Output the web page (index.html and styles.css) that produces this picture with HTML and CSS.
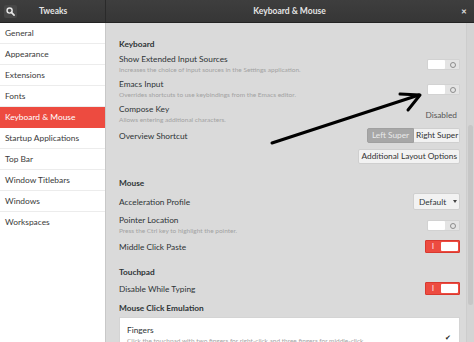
FILE: index.html
```html
<!DOCTYPE html>
<html>
<head>
    <meta charset="UTF-8">
    <title>Tweaks</title>
    <link rel="stylesheet" href="styles.css">
</head>
<body>
<div class="window">
    <div class="headerbar">
        <div class="header-left">
            <button class="search-btn">
                <svg width="9" height="9" viewBox="0 0 10 10"><circle cx="4" cy="4" r="2.8" fill="none" stroke="#e8e8e8" stroke-width="1.6"/><path d="M6 6 L9 9" stroke="#e8e8e8" stroke-width="1.8" stroke-linecap="round"/></svg>
            </button>
            <span class="app-name">Tweaks</span>
        </div>
        <div class="header-right">
            <span class="page-title">Keyboard &amp; Mouse</span>
            <span class="close">&#x2715;</span>
        </div>
    </div>
    <div class="main">
        <ul class="sidebar">
            <li>General</li>
            <li>Appearance</li>
            <li>Extensions</li>
            <li>Fonts</li>
            <li class="active">Keyboard &amp; Mouse</li>
            <li>Startup Applications</li>
            <li>Top Bar</li>
            <li>Window Titlebars</li>
            <li>Windows</li>
            <li>Workspaces</li>
        </ul>
        <div class="content">
            <div class="heading">Keyboard</div>
            <div class="row">
                <div class="text">
                    <div class="title">Show Extended Input Sources</div>
                    <div class="sub">Increases the choice of input sources in the Settings application.</div>
                </div>
                <span class="switch"><span class="knob"></span><span class="state"></span></span>
            </div>
            <div class="row">
                <div class="text">
                    <div class="title">Emacs Input</div>
                    <div class="sub">Overrides shortcuts to use keybindings from the Emacs editor.</div>
                </div>
                <span class="switch"><span class="knob"></span><span class="state"></span></span>
            </div>
            <div class="row">
                <div class="text">
                    <div class="title">Compose Key</div>
                    <div class="sub">Allows entering additional characters.</div>
                </div>
                <span class="value">Disabled</span>
            </div>
            <div class="row shortcut">
                <div class="title">Overview Shortcut</div>
                <div class="buttons">
                    <div class="linked">
                        <span class="btn pressed">Left Super</span>
                        <span class="btn">Right Super</span>
                    </div>
                    <span class="btn">Additional Layout Options</span>
                </div>
            </div>

            <div class="heading gap">Mouse</div>
            <div class="row simple">
                <div class="title">Acceleration Profile</div>
                <span class="combo">Default <span class="caret"></span></span>
            </div>
            <div class="row pointer">
                <div class="text">
                    <div class="title">Pointer Location</div>
                    <div class="sub">Press the Ctrl key to highlight the pointer.</div>
                </div>
                <span class="switch"><span class="knob"></span><span class="state"></span></span>
            </div>
            <div class="row simple">
                <div class="title">Middle Click Paste</div>
                <span class="switch on"><span class="state">I</span><span class="knob"></span></span>
            </div>

            <div class="heading gap">Touchpad</div>
            <div class="row simple">
                <div class="title">Disable While Typing</div>
                <span class="switch on"><span class="state">I</span><span class="knob"></span></span>
            </div>
            <div class="heading small-gap">Mouse Click Emulation</div>
            <div class="listbox">
                <div class="list-row">
                    <div class="text">
                        <div class="title">Fingers</div>
                        <div class="sub">Click the touchpad with two fingers for right-click and three fingers for middle-click.</div>
                    </div>
                    <span class="check">&#x2714;</span>
                </div>
            </div>
        </div>
        <div class="scrollbar"><div class="slider"></div></div>
    </div>
    <svg class="arrow" width="474" height="342" viewBox="0 0 474 342">
        <path d="M272 143 L419 95" stroke="#000" stroke-width="3" stroke-linecap="round" fill="none"/>
        <path d="M400 94 L420 95 L408 110" stroke="#000" stroke-width="3" stroke-linecap="round" stroke-linejoin="round" fill="none"/>
    </svg>
</div>
</body>
</html>
```

FILE: styles.css
```css
* {
    box-sizing: border-box;
}
html, body {
    margin: 0;
    padding: 0;
}
body {
    font-family: Lato, "Noto Sans", sans-serif;
    font-size: 8.3px;
    color: #2e3436;
    width: 474px;
    height: 342px;
    overflow: hidden;
}
.window {
    position: relative;
    width: 474px;
    height: 342px;
    display: flex;
    flex-direction: column;
    background-color: #dadada;
}
.headerbar {
    height: 23px;
    flex: none;
    display: flex;
    background: linear-gradient(#3e3e3e, #363636);
    border-bottom: 1px solid #232323;
    color: #e4e4e4;
    font-weight: bold;
}
.header-left {
    width: 106px;
    display: flex;
    align-items: center;
    border-right: 1px solid #2a2a2a;
    padding-left: 4px;
}
.search-btn {
    width: 13px;
    height: 13px;
    padding: 0;
    border: none;
    border-radius: 2px;
    background-color: #474747;
    display: flex;
    align-items: center;
    justify-content: center;
}
.app-name {
    margin-left: 22px;
    font-size: 8.5px;
}
.header-right {
    flex: 1;
    display: flex;
    align-items: center;
    padding-left: 40px;
    padding-right: 7px;
}
.page-title {
    flex: 1;
    text-align: center;
    font-size: 8.5px;
}
.close {
    font-size: 7px;
    color: #dcdcdc;
    margin-left: 28px;
}
.main {
    flex: 1;
    display: flex;
    min-height: 0;
}
.sidebar {
    list-style: none;
    margin: 0;
    padding: 0;
    width: 106px;
    flex: none;
    background-color: #fff;
    border-right: 1px solid #c8c8c8;
}
.sidebar li {
    height: 21px;
    line-height: 20px;
    padding-left: 5px;
    border-bottom: 1px solid #ececec;
    color: #3a3a3a;
    font-size: 8.4px;
}
.sidebar li:last-child {
    border-bottom: none;
}
.sidebar li.active {
    background-color: #ed4b40;
    color: #fff;
    border-bottom-color: #ed4b40;
}
.content {
    flex: 1;
    padding: 15px 6px 0 13px;
    overflow: hidden;
}
.heading {
    font-weight: bold;
    line-height: 12px;
    height: 12px;
}
.heading.gap {
    margin-top: 13px;
}
.heading.small-gap {
    margin-top: 7px;
}
.row {
    display: flex;
    justify-content: space-between;
    align-items: center;
    padding-top: 3px;
}
.row.simple {
    padding-top: 4px;
}
.row.pointer {
    padding-top: 4px;
}
.title {
    line-height: 12px;
    white-space: nowrap;
}
.sub {
    line-height: 10px;
    font-size: 6.5px;
    color: #a2a2a2;
    white-space: nowrap;
}
.switch {
    display: flex;
    width: 33px;
    height: 11px;
    background-color: #e4e4e4;
    border: 1px solid #d2d2d2;
    border-radius: 1px;
    flex: none;
}
.switch .knob {
    width: 17px;
    background-color: #fff;
    border-radius: 1px;
}
.switch .state {
    flex: 1;
    position: relative;
}
.switch .state::after {
    content: "";
    position: absolute;
    left: 5px;
    top: 2px;
    width: 4px;
    height: 4px;
    border: 1px solid #8c8c8c;
    border-radius: 50%;
}
.switch.on {
    width: 35px;
    height: 13px;
    background-color: #ed4b40;
    border-color: #d8392f;
}
.switch.on .state {
    color: #fff;
    font-size: 7px;
    line-height: 11px;
    text-align: center;
}
.switch.on .state::after {
    display: none;
}
.switch.on .knob {
    width: 17px;
    margin: 1px;
}
.value {
    color: #555;
    margin-right: 3px;
    margin-top: 2px;
}
.row.shortcut {
    align-items: flex-start;
}
.row.shortcut .title {
    margin-top: 2px;
}
.buttons {
    display: flex;
    flex-direction: column;
    align-items: flex-end;
    gap: 6px;
}
.linked {
    display: flex;
}
.btn {
    display: block;
    height: 15px;
    line-height: 13px;
    padding: 0 2px;
    background-color: #f2f2f2;
    border: 1px solid #cfcfcf;
    border-radius: 2px;
    color: #333;
    white-space: nowrap;
    text-align: center;
}
.linked .btn:first-child {
    border-radius: 2px 0 0 2px;
    width: 47px;
}
.linked .btn:last-child {
    border-radius: 0 2px 2px 0;
    border-left: none;
    width: 46px;
}
.btn.pressed {
    background-color: #a7a7a7;
    border-color: #a0a0a0;
    color: #eaeaea;
}
.combo {
    display: flex;
    align-items: center;
    height: 17px;
    width: 47px;
    padding-left: 5px;
    background-color: #f2f2f2;
    border: 1px solid #cfcfcf;
    border-radius: 2px;
}
.caret {
    margin-left: 7px;
    width: 0;
    height: 0;
    border-left: 2.5px solid transparent;
    border-right: 2.5px solid transparent;
    border-top: 3px solid #444;
}
.listbox {
    margin-top: 3px;
    background-color: #fff;
    border: 1px solid #d4d4d4;
    height: 40px;
}
.list-row {
    display: flex;
    justify-content: space-between;
    align-items: center;
    padding: 7px 8px 0 7px;
}
.list-row .title {
    line-height: 11px;
}
.list-row .sub {
    line-height: 9px;
}
.check {
    font-size: 7px;
    color: #222;
    margin-top: 5px;
}
.scrollbar {
    width: 8px;
    flex: none;
    background-color: #d4d4d4;
    border-left: 1px solid #cdcdcd;
    padding: 2px 1px;
}
.slider {
    height: 180px;
    margin-top: 100px;
    background-color: #c6c6c6;
    border-radius: 3px;
}
.arrow {
    position: absolute;
    left: 0;
    top: 0;
    pointer-events: none;
}
```
